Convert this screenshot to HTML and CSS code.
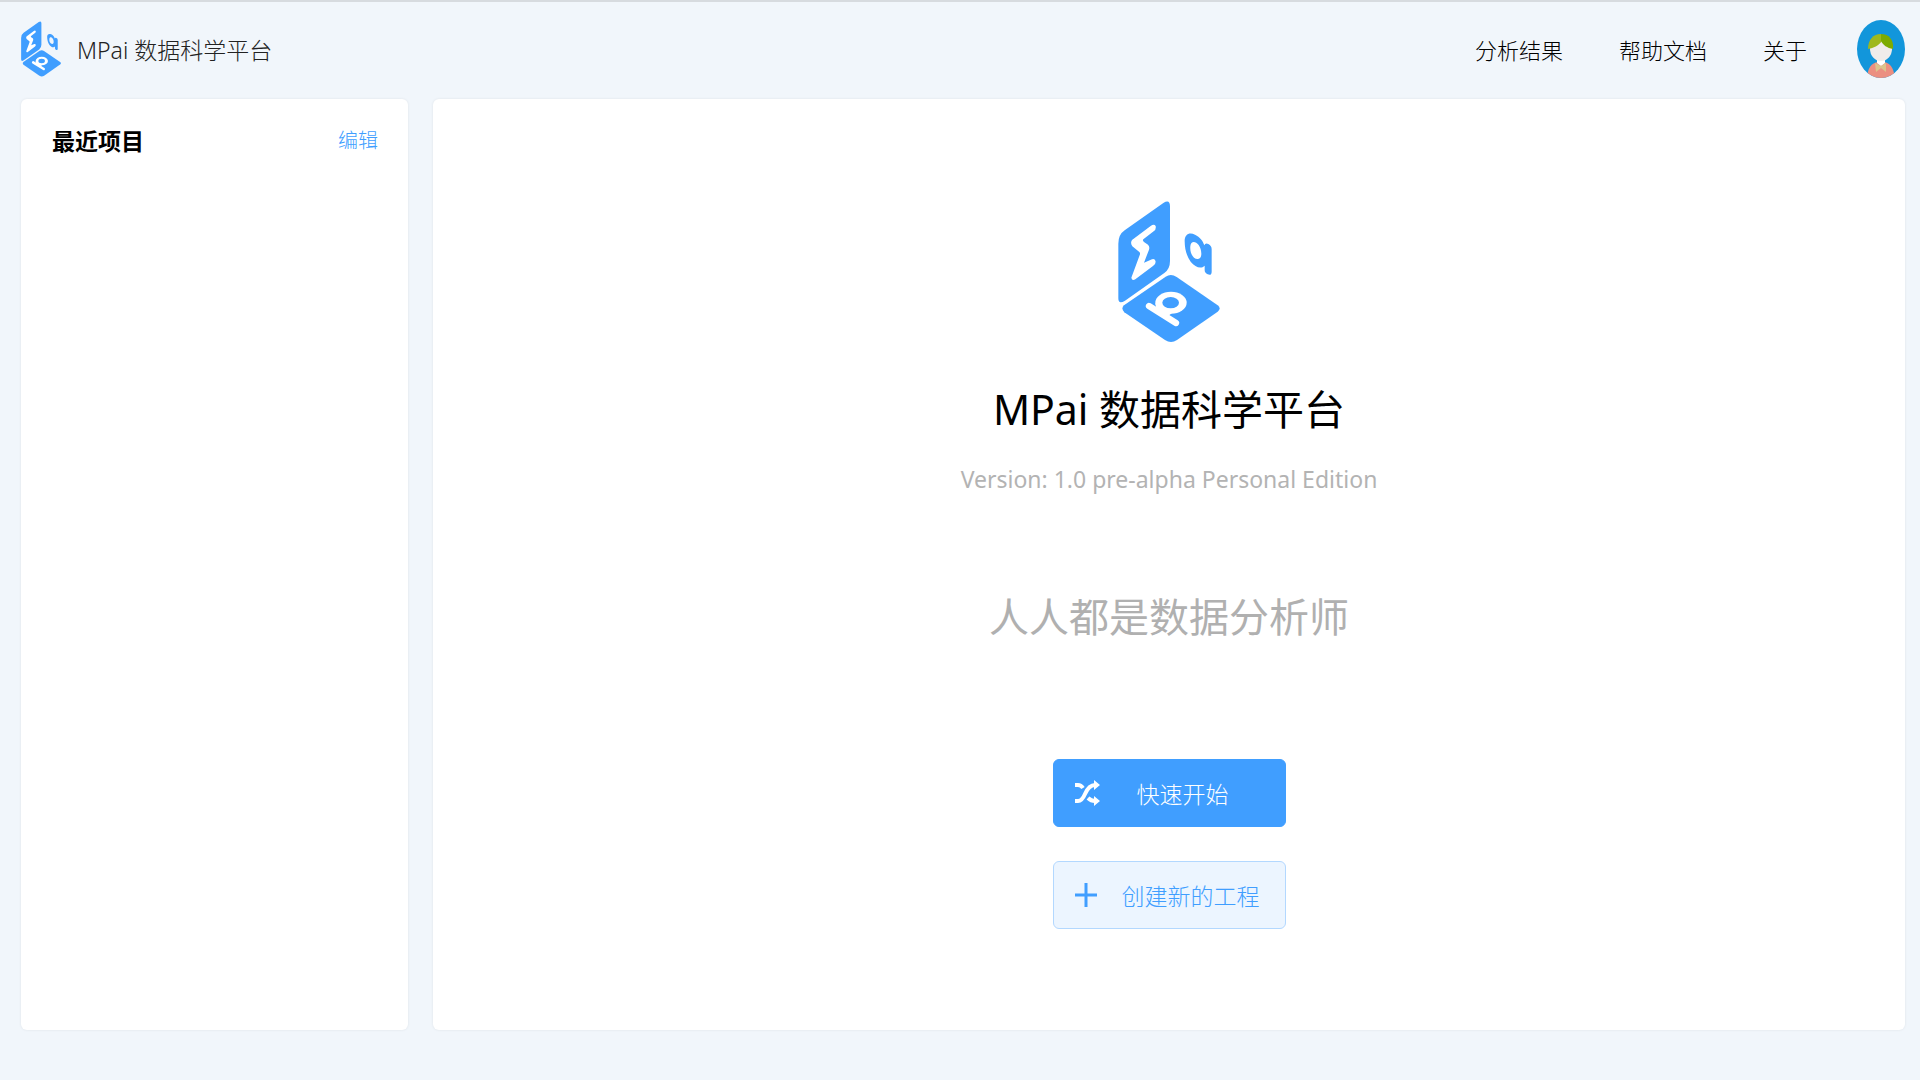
FILE: index.html
```html
<!DOCTYPE html>
<html lang="zh-CN">
<head>
  <meta charset="UTF-8">
  <meta name="viewport" content="width=device-width, initial-scale=1.0">
  <title>MPai 数据科学平台</title>
  <link rel="stylesheet" href="styles.css">
</head>
<body>

<svg class="sprite" aria-hidden="true">
  <symbol id="logo" viewBox="60 56 306 426">
    <path fill="#409eff" d="M61 184Q61 157 80 144L196 62Q216 50 216 72V236Q216 260 199 272L81 355Q61 368 61 348Z"/>
    <path fill="#fff" d="M102 173L158 131Q168 124 173 131Q175 142 167 147L137 170Q132 174 138 179L150 187Q156 193 153 202L138 241L162 231Q172 228 173 238Q173 246 165 251L112 291Q102 297 100 286L126 216Q127 212 124 209L103 192Q96 182 102 173Z"/>
    <path fill="#409eff" d="M78 369L203 283Q219 273 236 284L359 369Q371 378 359 388L237 473Q219 485 201 473L79 390Q68 379 78 369Z"/>
    <ellipse cx="219" cy="361" rx="47" ry="33" fill="#fff"/>
    <path fill="#fff" d="M172 362L176 384L208 403L222 392Z"/>
    <path fill="none" stroke="#fff" stroke-width="19" stroke-linecap="round" d="M153 371L234 422"/>
    <ellipse cx="218" cy="361" rx="25" ry="17" fill="#409eff"/>
    <path fill="#409eff" fill-rule="evenodd" d="M260 176C260 156 274 149 291 157C306 164 314 175 319 189Q322 180 331 185Q341 190 341 201V268Q341 281 329 276Q320 272 320 263V250C309 261 292 255 278 238C266 222 260 200 260 176ZM277 192C275 213 286 231 300 230C314 229 312 202 302 188C292 175 278 176 277 192Z"/>
  </symbol>
</svg>

<header class="header">
  <a href="#" class="brand">
    <svg class="brand-logo"><use href="#logo"/></svg>
    <span>MPai 数据科学平台</span>
  </a>
  <nav class="nav">
    <a href="#">分析结果</a>
    <a href="#">帮助文档</a>
    <a href="#">关于</a>
  </nav>
  <button class="avatar" aria-label="用户">
    <svg viewBox="0 0 48 58" preserveAspectRatio="none">
      <clipPath id="face"><ellipse cx="24" cy="29" rx="24" ry="29"/></clipPath>
      <g clip-path="url(#face)">
        <rect width="48" height="58" fill="#1296db"/>
        <path fill="#eb8f81" d="M10 58Q11 43 21 42H27Q36 43 38 58Z"/>
        <path fill="#fff" d="M20 37H28V43L24 46L20 43Z"/>
        <path fill="#dcc48c" d="M18 43L24 46L29 43V52L24 48L19 52Z"/>
        <ellipse cx="24" cy="29" rx="11" ry="12" fill="#f0ecea"/>
        <path fill="#9fb81c" d="M11 29C11 20 16 14 24 14L25 21C21 26 17 28 11 29Z"/>
        <path fill="#7dab00" d="M24 14C32 14 37 20 36 29C30 28 26 25 24 21Z"/>
      </g>
    </svg>
  </button>
</header>

<div class="layout">
  <aside class="panel sidebar">
    <div class="sidebar-head">
      <h2>最近项目</h2>
      <button class="edit">编辑</button>
    </div>
  </aside>

  <main class="panel welcome">
    <svg class="welcome-logo"><use href="#logo"/></svg>
    <h1>MPai 数据科学平台</h1>
    <p class="version">Version: 1.0 pre-alpha Personal Edition</p>
    <p class="slogan">人人都是数据分析师</p>
    <div class="actions">
      <button class="btn btn-primary">
        <svg viewBox="0 0 26 26">
          <path fill="none" stroke="#fff" stroke-width="4" d="M1 5H4Q7 5 9 8M1 21H4Q8 21 11 14Q15 5 21 5M14 18Q17 21 21 21"/>
          <path fill="#fff" d="M20 0L26 5L20 10ZM20 16L26 21L20 26Z"/>
        </svg>
        <span>快速开始</span>
      </button>
      <button class="btn btn-plain">
        <svg viewBox="0 0 26 26">
          <path fill="none" stroke="#409eff" stroke-width="3" d="M12 1V25M1 13H23"/>
        </svg>
        <span>创建新的工程</span>
      </button>
    </div>
  </main>
</div>

</body>
</html>
```
FILE: styles.css
```css
* {
  box-sizing: border-box;
}

body {
  margin: 0;
  min-height: 100vh;
  display: flex;
  flex-direction: column;
  padding: 0 15px 50px 21px;
  border-top: 2px solid #d7dbdf;
  background: #f1f6fb;
  color: #000;
  font-family: "Noto Sans", "Noto Sans CJK SC", sans-serif;
}

h1, h2, p {
  margin: 0;
  font-weight: 400;
}

a {
  color: inherit;
  text-decoration: none;
}

button {
  font-family: inherit;
  cursor: pointer;
}

.sprite {
  display: none;
}

.header {
  display: flex;
  align-items: center;
  height: 97px;
  padding-bottom: 4px;
}

.brand {
  display: flex;
  align-items: center;
  gap: 16px;
  margin-right: auto;
  font-size: 23px;
  font-weight: 300;
  color: #222;
}
.brand-logo {
  width: 40px;
  height: 56px;
}

.nav {
  display: flex;
  gap: 56px;
  margin-right: 50px;
  font-size: 22px;
  font-weight: 300;
}

.avatar {
  width: 48px;
  height: 58px;
  padding: 0;
  border: none;
  background: none;
}
.avatar svg {
  display: block;
  width: 100%;
  height: 100%;
}

.layout {
  flex: 1;
  display: flex;
  gap: 25px;
}

.panel {
  background: #fff;
  border-radius: 6px;
  box-shadow: 0 0 3px rgba(0, 0, 0, 0.08);
}

.sidebar {
  flex: 0 0 387px;
  padding: 24px 30px 24px 31px;
}
.sidebar-head {
  display: flex;
  justify-content: space-between;
  align-items: center;
}
.sidebar-head h2 {
  font-size: 23px;
  line-height: 36px;
  font-weight: 700;
}
.edit {
  padding: 0;
  border: none;
  background: none;
  font-size: 20px;
  line-height: 36px;
  font-weight: 300;
  color: #409eff;
}

.welcome {
  flex: 1;
  display: flex;
  flex-direction: column;
  align-items: center;
  justify-content: center;
}
.welcome-logo {
  width: 102px;
  height: 142px;
}
.welcome h1 {
  margin-top: 30px;
  font-size: 41px;
  line-height: 72px;
}
.version {
  margin-top: 16px;
  font-size: 23px;
  line-height: 36px;
  color: #b3b3b3;
}
.slogan {
  margin-top: 84px;
  font-size: 40px;
  line-height: 72px;
  color: #b0b0b0;
}

.actions {
  display: flex;
  flex-direction: column;
  gap: 34px;
  margin-top: 106px;
}
.btn {
  display: flex;
  align-items: center;
  width: 233px;
  height: 68px;
  padding: 0 20px;
  border: 1px solid #409eff;
  border-radius: 6px;
  font-size: 23px;
  font-weight: 300;
}
.btn svg {
  width: 26px;
  height: 26px;
}
.btn-primary {
  gap: 37px;
  background: #409eff;
  color: #fff;
}
.btn-plain {
  gap: 22px;
  background: #ecf5ff;
  border-color: #b3d8ff;
  color: #409eff;
}
```
